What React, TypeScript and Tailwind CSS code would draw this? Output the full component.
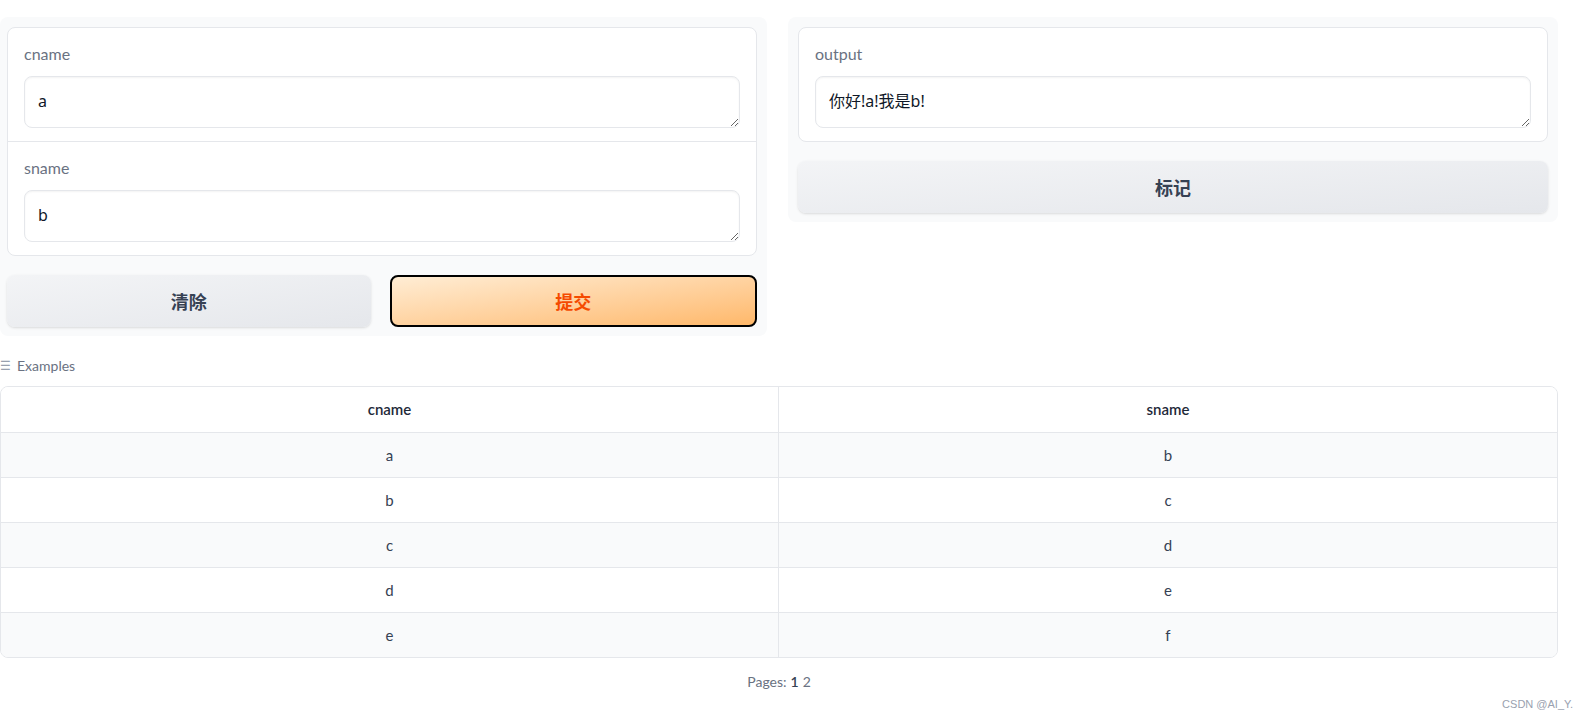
import React from "react";

const latin = "font-['Lato','Noto_Sans_CJK_SC',sans-serif]";

const rows = [
  ["a", "b"],
  ["b", "c"],
  ["c", "d"],
  ["d", "e"],
  ["e", "f"],
];

const Field = ({ label, value, top }: { label: string; value: string; top?: boolean }) => (
  <div className={`px-4 pt-4 pb-[13px] ${top ? "border-t border-gray-200" : ""}`}>
    <div className={`h-5 mb-3 text-[16px] leading-5 text-gray-500 ${latin}`}>{label}</div>
    <textarea
      readOnly
      rows={1}
      defaultValue={value}
      className="block w-full h-[52px] px-[13px] py-3 text-[16px] leading-6 text-gray-900 bg-white border border-gray-200 rounded-lg resize-y outline-none shadow-[inset_0_1px_2px_rgba(0,0,0,0.05)] font-['Noto_Sans','Noto_Sans_CJK_SC',sans-serif]"
    />
  </div>
);

export default function App() {
  return (
    <div className={`min-h-[720px] bg-white ${latin}`}>
      <div className="w-[1558px] pt-[17px]">
        {/* Top row: inputs + output */}
        <div className="flex items-start gap-[21px]">
          <div className="w-[767px] bg-gray-50 rounded-lg pl-[7px] pr-[10px] pt-[10px] pb-[9px]">
            <div className="bg-white border border-gray-200 rounded-lg">
              <Field label="cname" value="a" />
              <Field label="sname" value="b" top />
            </div>
            <div className="flex gap-[19px] mt-[19px]">
              <button className="flex-1 h-[52px] rounded-lg bg-gradient-to-br from-gray-100 to-gray-200 text-gray-700 text-[18px] font-bold shadow-sm font-['Noto_Sans_CJK_SC',sans-serif]">
                清除
              </button>
              <button className="flex-1 h-[52px] rounded-lg border-2 border-black bg-gradient-to-br from-orange-100 to-orange-300 text-orange-600 text-[18px] font-bold font-['Noto_Sans_CJK_SC',sans-serif]">
                提交
              </button>
            </div>
          </div>

          <div className="flex-1 bg-gray-50 rounded-lg px-[10px] pt-[10px] pb-[9px]">
            <div className="bg-white border border-gray-200 rounded-lg">
              <Field label="output" value="你好!a!我是b!" />
            </div>
            <button className="w-full h-[52px] mt-[19px] rounded-lg bg-gradient-to-br from-gray-100 to-gray-200 text-gray-700 text-[18px] font-bold shadow-sm font-['Noto_Sans_CJK_SC',sans-serif]">
              标记
            </button>
          </div>
        </div>

        {/* Examples */}
        <div className="mt-[20px] h-5 flex items-center gap-[6px] text-[14px] leading-5 text-gray-500">
          <span className="text-[12px] text-gray-400">☰</span>
          <span>Examples</span>
        </div>

        <div className="mt-[10px] border border-gray-200 rounded-lg overflow-hidden">
          <div className="grid grid-cols-2 h-[45px] bg-white">
            <div className="flex items-center justify-center border-r border-gray-200 text-[15px] font-semibold text-gray-800">cname</div>
            <div className="flex items-center justify-center text-[15px] font-semibold text-gray-800">sname</div>
          </div>
          {rows.map((r, i) => (
            <div
              key={i}
              className={`grid grid-cols-2 h-[45px] border-t border-gray-200 ${i % 2 === 0 ? "bg-gray-50" : "bg-white"}`}
            >
              <div className="flex items-center justify-center border-r border-gray-200 text-[15px] text-gray-700">{r[0]}</div>
              <div className="flex items-center justify-center text-[15px] text-gray-700">{r[1]}</div>
            </div>
          ))}
        </div>

        <div className="mt-[14px] h-5 flex items-center justify-center gap-1 text-[14px] leading-5 text-gray-500">
          <span>Pages:</span>
          <span className="text-gray-700 font-semibold">1</span>
          <span>2</span>
        </div>
      </div>

      <div className="w-[1573px] flex justify-end mt-[4px] text-[11px] leading-4 text-gray-400 font-['Liberation_Sans',sans-serif]">
        CSDN @AI_Y.
      </div>
    </div>
  );
}
